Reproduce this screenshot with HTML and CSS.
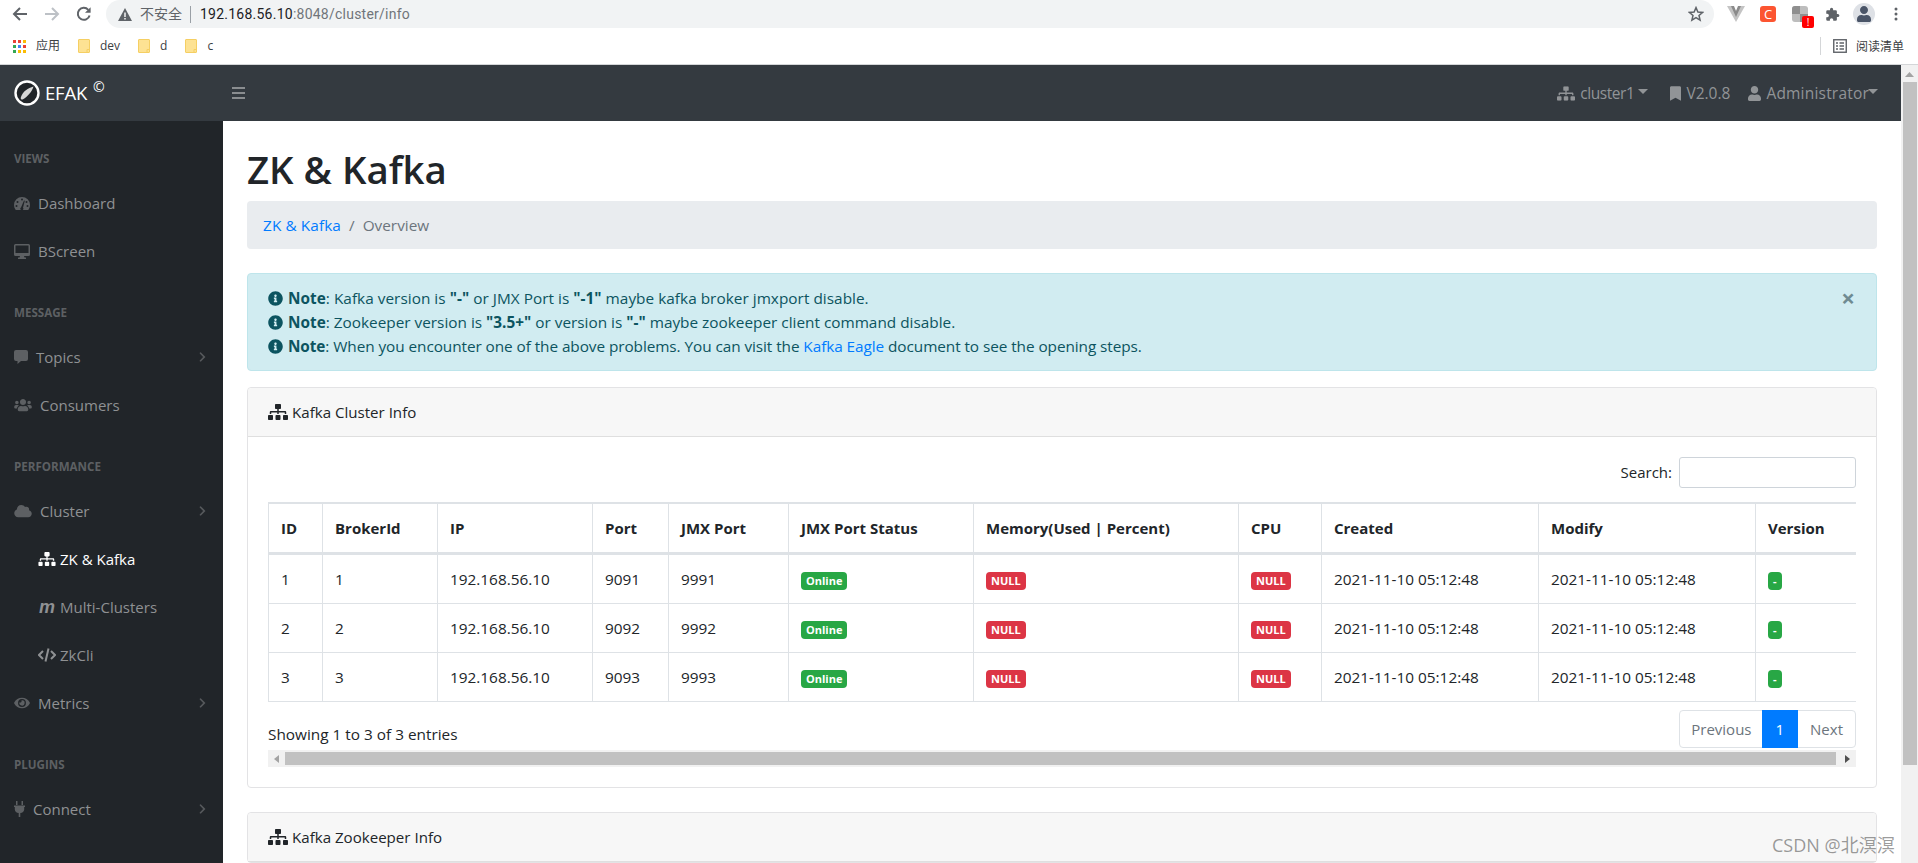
FILE: index.html
```html
<!DOCTYPE html>
<html lang="en">
<head>
<meta charset="utf-8">
<title>ZK &amp; Kafka - EFAK</title>
<link rel="stylesheet" href="styles.css">
</head>
<body>
<svg class="sprite" aria-hidden="true">
  <symbol id="i-sitemap" viewBox="0 0 640 512"><path d="M128 352H32c-17.67 0-32 14.33-32 32v96c0 17.67 14.33 32 32 32h96c17.67 0 32-14.33 32-32v-96c0-17.67-14.33-32-32-32zm-24-80h192v48h48v-48h192v48h48v-57.59c0-21.17-17.23-38.41-38.41-38.41H344v-64h40c17.67 0 32-14.33 32-32V32c0-17.67-14.33-32-32-32H256c-17.67 0-32 14.33-32 32v96c0 17.67 14.33 32 32 32h40v64H94.41C73.23 224 56 241.23 56 262.41V320h48v-48zm264 80h-96c-17.67 0-32 14.33-32 32v96c0 17.67 14.33 32 32 32h96c17.67 0 32-14.33 32-32v-96c0-17.67-14.33-32-32-32zm240 0h-96c-17.67 0-32 14.33-32 32v96c0 17.67 14.33 32 32 32h96c17.67 0 32-14.33 32-32v-96c0-17.67-14.33-32-32-32z"/></symbol>
  <symbol id="i-info" viewBox="0 0 512 512"><path d="M256 8C119.043 8 8 119.083 8 256c0 136.997 111.043 248 248 248s248-111.003 248-248C504 119.083 392.957 8 256 8zm0 110c23.196 0 42 18.804 42 42s-18.804 42-42 42-42-18.804-42-42 18.804-42 42-42zm56 254c0 6.627-5.373 12-12 12h-88c-6.627 0-12-5.373-12-12v-24c0-6.627 5.373-12 12-12h12v-64h-12c-6.627 0-12-5.373-12-12v-24c0-6.627 5.373-12 12-12h64c6.627 0 12 5.373 12 12v100h12c6.627 0 12 5.373 12 12v24z"/></symbol>
  <symbol id="i-chev" viewBox="0 0 320 512"><path d="M285.476 272.971L91.132 467.314c-9.373 9.373-24.569 9.373-33.941 0l-22.667-22.667c-9.357-9.357-9.375-24.522-.04-33.901L188.505 256 34.484 101.255c-9.335-9.379-9.317-24.544.04-33.901l22.667-22.667c9.373-9.373 24.569-9.373 33.941 0L285.475 239.03c9.373 9.372 9.373 24.568.001 33.941z"/></symbol>
</svg>

<header class="toolbar">
  <div class="nav-btns">
    <span class="nav-btn"><svg width="16" height="16" viewBox="0 0 16 16"><path d="M15 8H2.5M8 2 2 8l6 6" class="stroke-dark"/></svg></span>
    <span class="nav-btn"><svg width="16" height="16" viewBox="0 0 16 16"><path d="M1 8h12.5M8 2l6 6-6 6" class="stroke-light"/></svg></span>
    <span class="nav-btn"><svg width="16" height="16" viewBox="0 0 16 16"><path d="M13.6 9.5A6 6 0 1 1 12.3 3.8" class="stroke-dark"/><path d="M14.6 1.2v5.6H9z" class="fill-dark"/></svg></span>
  </div>
  <div class="address">
    <svg width="14" height="13" viewBox="0 0 14 13"><path d="M7 0 14 13H0z" class="fill-dark"/><path d="M6.3 4.5h1.4v4.5H6.3zM6.3 10h1.4v1.4H6.3z" class="fill-white"/></svg>
    <span class="insecure">不安全</span>
    <span class="addr-sep"></span>
    <span class="url"><span class="url-host">192.168.56.10</span>:8048/cluster/info</span>
    <svg class="star" width="16" height="16" viewBox="0 0 16 16"><path d="M8 1.6 9.9 6l4.7.4-3.6 3.1 1.1 4.6L8 11.7l-4.1 2.4L5 9.5 1.4 6.4 6.100 6z" class="stroke-thin"/></svg>
  </div>
  <div class="exts">
    <span class="ext"><svg width="18" height="16" viewBox="0 0 18 16"><path d="M0 0h6l3 6 3-6h6L9 16z" class="fill-v"/><path d="M4 0h3l2 5 2-5h3L9 11z" class="fill-v2"/></svg></span>
    <span class="ext"><span class="ext-c">C</span></span>
    <span class="ext ext-badge">
      <svg width="16" height="16" viewBox="0 0 16 16"><rect width="16" height="16" rx="3" class="fill-g1"/><path d="M0 8h8V0H3a3 3 0 0 0-3 3z" class="fill-g2"/><path d="M8 8h8v5a3 3 0 0 1-3 3H8z" class="fill-g2"/></svg>
      <span class="ext-flag">!</span>
    </span>
    <span class="ext"><svg width="15" height="15" viewBox="0 0 24 24"><path d="M20.5 11H19V7a2 2 0 0 0-2-2h-4V3.500a2.500 2.500 0 0 0-5 0V5H4a2 2 0 0 0-2 2v3.800h1.500a2.700 2.700 0 0 1 0 5.400H2V20a2 2 0 0 0 2 2h3.800v-1.500a2.700 2.700 0 0 1 5.400 0V22H17a2 2 0 0 0 2-2v-4h1.500a2.500 2.500 0 0 0 0-5z" class="fill-dark"/></svg></span>
    <span class="ext"><span class="avatar"><svg width="14" height="16" viewBox="0 0 448 512"><path d="M224 256c70.700 0 128-57.300 128-128S294.700 0 224 0 96 57.300 96 128s57.300 128 128 128zm89.600 32h-16.700c-22.200 10.200-46.900 16-72.900 16s-50.600-5.800-72.900-16h-16.700C60.200 288 0 348.200 0 422.400V464c0 26.500 21.500 48 48 48h352c26.500 0 48-21.500 48-48v-41.600c0-74.200-60.200-134.400-134.400-134.400z" class="fill-avatar"/></svg></span></span>
    <span class="ext"><svg width="4" height="14" viewBox="0 0 4 14"><circle cx="2" cy="2" r="1.500" class="fill-dark"/><circle cx="2" cy="7" r="1.500" class="fill-dark"/><circle cx="2" cy="12" r="1.500" class="fill-dark"/></svg></span>
  </div>
</header>

<nav class="bookmarks">
  <span class="bm">
    <svg width="13" height="13" viewBox="0 0 13 13"><rect width="3" height="3" fill="#ea4335"/><rect x="5" width="3" height="3" fill="#ea4335"/><rect x="10" width="3" height="3" fill="#fbbc04"/><rect y="5" width="3" height="3" fill="#34a853"/><rect x="5" y="5" width="3" height="3" fill="#4285f4"/><rect x="10" y="5" width="3" height="3" fill="#ea4335"/><rect y="10" width="3" height="3" fill="#34a853"/><rect x="5" y="10" width="3" height="3" fill="#fbbc04"/><rect x="10" y="10" width="3" height="3" fill="#fbbc04"/></svg>
    <span>应用</span>
  </span>
  <span class="bm"><svg class="folder" viewBox="0 0 12 14"><path d="M1 .5h10a.5.5 0 0 1 .5.5v12a.5.5 0 0 1-.5.500H1a.5.5 0 0 1-.5-.500V1A.5.5 0 0 1 1 .5z" class="folder-shape"/><path d="M9 13.500v-3h2.500" class="folder-fold"/></svg><span>dev</span></span>
  <span class="bm"><svg class="folder" viewBox="0 0 12 14"><path d="M1 .5h10a.5.5 0 0 1 .5.5v12a.5.5 0 0 1-.5.500H1a.5.5 0 0 1-.5-.500V1A.5.5 0 0 1 1 .5z" class="folder-shape"/><path d="M9 13.500v-3h2.500" class="folder-fold"/></svg><span>d</span></span>
  <span class="bm"><svg class="folder" viewBox="0 0 12 14"><path d="M1 .5h10a.5.5 0 0 1 .5.5v12a.5.5 0 0 1-.5.500H1a.5.5 0 0 1-.5-.500V1A.5.5 0 0 1 1 .5z" class="folder-shape"/><path d="M9 13.500v-3h2.500" class="folder-fold"/></svg><span>c</span></span>
  <span class="reading">
    <svg width="14" height="14" viewBox="0 0 14 14"><rect x=".75" y=".75" width="12.500" height="12.500" class="stroke-list"/><path d="M3 4h2M3 7h2M3 10h2M6.500 4H11M6.500 7H11M6.500 10H11" class="stroke-list"/></svg>
    <span>阅读清单</span>
  </span>
</nav>

<div class="window">
  <div class="viewport">
    <div class="navbar">
      <a class="brand">
        <svg width="26" height="26" viewBox="0 0 26 26"><circle cx="13" cy="13" r="11.500" class="brand-ring"/><path d="M19.500 6.500C14 8 9 11 6.800 17.500c-.5 1.500 1 2.700 2.300 1.800C13.500 16.500 17.500 12.500 19.500 6.500z" class="brand-needle"/></svg>
        <span class="brand-name">EFAK</span>
        <span class="brand-copy">©</span>
      </a>
      <span class="toggler"><span></span><span></span><span></span></span>
      <div class="nav-right">
        <span class="nav-item"><svg class="ic-nav" width="18" height="15" viewBox="0 0 640 512"><use href="#i-sitemap"/></svg><span class="nav-cluster">cluster1</span><i class="caret"></i></span>
        <span class="nav-item nav-ver"><svg class="ic-nav" width="11" height="15" viewBox="0 0 384 512"><path d="M0 512V48C0 21.490 21.490 0 48 0h288c26.510 0 48 21.490 48 48v464L192 400 0 512z"/></svg>V2.0.8</span>
        <span class="nav-item nav-admin"><svg class="ic-nav" width="13" height="15" viewBox="0 0 448 512"><path d="M224 256c70.700 0 128-57.300 128-128S294.700 0 224 0 96 57.300 96 128s57.300 128 128 128zm89.600 32h-16.700c-22.200 10.200-46.900 16-72.900 16s-50.600-5.800-72.900-16h-16.700C60.200 288 0 348.200 0 422.400V464c0 26.500 21.500 48 48 48h352c26.500 0 48-21.500 48-48v-41.600c0-74.200-60.200-134.400-134.400-134.400z"/></svg>Administrator<i class="caret"></i></span>
      </div>
    </div>

    <div class="layout">
      <aside class="sidebar">
        <div class="side-head">Views</div>
        <a class="side-link">
          <svg class="side-ic" width="16" height="14" viewBox="0 0 16 14"><path d="M8 1a8 8 0 0 0-8 8c0 1.600.4 3.100 1.200 4.300.2.400.5.700 1 .7h11.600c.5 0 .8-.3 1-.7A8 8 0 0 0 16 9a8 8 0 0 0-8-8z"/><circle cx="8" cy="3.500" r="1" class="hole"/><circle cx="3.500" cy="6" r="1" class="hole"/><circle cx="12.500" cy="6" r="1" class="hole"/><circle cx="2.500" cy="10" r="1" class="hole"/><circle cx="13.500" cy="10" r="1" class="hole"/><path d="M7 11.500 10 4.500l.8.3L9 11.800A1.500 1.500 0 1 1 7 11.500z" class="hole"/></svg>
          <span>Dashboard</span>
        </a>
        <a class="side-link">
          <svg class="side-ic" width="16" height="15" viewBox="0 0 16 15"><path d="M1.500 0h13A1.500 1.500 0 0 1 16 1.500v9a1.500 1.500 0 0 1-1.500 1.500H10l.5 1.500H12V15H4v-1.500h1.500L6 12H1.500A1.500 1.500 0 0 1 0 10.500v-9A1.500 1.500 0 0 1 1.500 0zm0 1.500v7.500h13V1.500z" fill-rule="evenodd"/></svg>
          <span>BScreen</span>
        </a>

        <div class="side-head">Message</div>
        <a class="side-link">
          <svg class="side-ic" width="14" height="14" viewBox="0 0 14 14"><path d="M2 0h10a2 2 0 0 1 2 2v7a2 2 0 0 1-2 2H7l-3.500 3V11H2a2 2 0 0 1-2-2V2a2 2 0 0 1 2-2z"/></svg>
          <span>Topics</span>
          <svg class="chev" width="7" height="12" viewBox="0 0 320 512"><use href="#i-chev"/></svg>
        </a>
        <a class="side-link">
          <svg class="side-ic" width="18" height="14" viewBox="0 0 640 512"><path d="M96 224c35.300 0 64-28.700 64-64s-28.700-64-64-64-64 28.700-64 64 28.700 64 64 64zm448 0c35.300 0 64-28.700 64-64s-28.700-64-64-64-64 28.700-64 64 28.700 64 64 64zm32 32h-64c-17.600 0-33.500 7.100-45.100 18.600 40.300 22.100 68.900 62 75.100 109.400h66c17.700 0 32-14.300 32-32v-32c0-35.300-28.700-64-64-64zm-256 0c61.900 0 112-50.100 112-112S381.900 32 320 32 208 82.100 208 144s50.100 112 112 112zm76.800 32h-8.300c-20.800 10-43.900 16-68.500 16s-47.600-6-68.500-16h-8.300C179.600 288 128 339.600 128 403.200V432c0 26.500 21.500 48 48 48h288c26.500 0 48-21.500 48-48v-28.800c0-63.600-51.600-115.200-115.200-115.200zm-223.700-13.400C161.500 263.100 145.600 256 128 256H64c-35.300 0-64 28.700-64 64v32c0 17.700 14.300 32 32 32h65.900c6.300-47.400 34.900-87.300 75.200-109.400z"/></svg>
          <span>Consumers</span>
        </a>

        <div class="side-head">Performance</div>
        <a class="side-link">
          <svg class="side-ic" width="18" height="14" viewBox="0 0 640 512"><path d="M537.600 226.600c4.100-10.700 6.400-22.400 6.400-34.600 0-53-43-96-96-96-19.700 0-38.100 6-53.300 16.200C367 64.200 315.300 32 256 32c-88.400 0-160 71.600-160 160 0 2.700.1 5.400.2 8.100C40.200 219.800 0 273.200 0 336c0 79.500 64.500 144 144 144h368c70.700 0 128-57.300 128-128 0-61.900-44-113.600-102.400-125.400z"/></svg>
          <span>Cluster</span>
          <svg class="chev" width="7" height="12" viewBox="0 0 320 512"><use href="#i-chev"/></svg>
        </a>
        <a class="side-link sub active">
          <svg class="sub-ic" width="18" height="14" viewBox="0 0 640 512"><use href="#i-sitemap"/></svg>
          <span>ZK &amp; Kafka</span>
        </a>
        <a class="side-link sub">
          <span class="sub-ic sub-m">m</span>
          <span>Multi-Clusters</span>
        </a>
        <a class="side-link sub">
          <svg class="sub-ic" width="18" height="14" viewBox="0 0 18 14"><path d="M5 3 1 7l4 4M13 3l4 4-4 4" class="code-line"/><path d="M10.500 0.500 7.500 13.500" class="code-line"/></svg>
          <span>ZkCli</span>
        </a>
        <a class="side-link">
          <svg class="side-ic" width="16" height="14" viewBox="0 0 576 512"><path d="M572.520 241.400C518.290 135.590 410.930 64 288 64S57.680 135.640 3.480 241.410a32.350 32.350 0 0 0 0 29.190C57.710 376.410 165.070 448 288 448s230.320-71.640 284.520-177.410a32.350 32.350 0 0 0 0-29.190zM288 400a144 144 0 1 1 144-144 143.930 143.930 0 0 1-144 144zm0-240a95.310 95.310 0 0 0-25.310 3.790 47.850 47.850 0 0 1-66.900 66.900A95.780 95.780 0 1 0 288 160z"/></svg>
          <span>Metrics</span>
          <svg class="chev" width="7" height="12" viewBox="0 0 320 512"><use href="#i-chev"/></svg>
        </a>

        <div class="side-head">Plugins</div>
        <a class="side-link">
          <svg class="side-ic" width="11" height="16" viewBox="0 0 11 16"><path d="M2 0h1.500v4H2zM7.500 0H9v4H7.500zM0 4.500h11V6h-.8v2.500A4 4 0 0 1 6.300 12v4H4.700v-4A4 4 0 0 1 .8 8.500V6H0z"/></svg>
          <span>Connect</span>
          <svg class="chev" width="7" height="12" viewBox="0 0 320 512"><use href="#i-chev"/></svg>
        </a>
      </aside>

      <main class="content">
        <h1 class="title">ZK &amp; Kafka</h1>
        <ol class="breadcrumb">
          <li><a class="link crumb-link">ZK &amp; Kafka</a></li>
          <li class="crumb-sep">/</li>
          <li class="crumb-cur">Overview</li>
        </ol>

        <div class="alert">
          <span class="alert-close">×</span>
          <div class="note-wide"><svg class="ic-info" viewBox="0 0 512 512"><use href="#i-info"/></svg> <strong>Note</strong>: Kafka version is <strong>"-"</strong> or JMX Port is <strong>"-1"</strong> maybe kafka broker jmxport disable.</div>
          <div><svg class="ic-info" viewBox="0 0 512 512"><use href="#i-info"/></svg> <strong>Note</strong>: Zookeeper version is <strong>"3.5+"</strong> or version is <strong>"-"</strong> maybe zookeeper client command disable.</div>
          <div class="note-tight"><svg class="ic-info" viewBox="0 0 512 512"><use href="#i-info"/></svg> <strong>Note</strong>: When you encounter one of the above problems. You can visit the <a class="link">Kafka Eagle</a> document to see the opening steps.</div>
        </div>

        <section class="card">
          <div class="card-head"><svg width="20" height="16" viewBox="0 0 640 512"><use href="#i-sitemap"/></svg>Kafka Cluster Info</div>
          <div class="card-body">
            <label class="search"><span class="search-label">Search:</span><input class="search-input" type="text"></label>
            <div class="table-clip">
              <table class="data">
                <colgroup>
                  <col class="c-id"><col class="c-broker"><col class="c-ip"><col class="c-port"><col class="c-jmx"><col class="c-status"><col class="c-mem"><col class="c-cpu"><col class="c-date"><col class="c-date"><col class="c-ver">
                </colgroup>
                <thead>
                  <tr><th>ID</th><th>BrokerId</th><th>IP</th><th>Port</th><th>JMX Port</th><th>JMX Port Status</th><th>Memory(Used | Percent)</th><th>CPU</th><th>Created</th><th>Modify</th><th>Version</th></tr>
                </thead>
                <tbody>
                  <tr><td>1</td><td>1</td><td>192.168.56.10</td><td>9091</td><td>9991</td><td><span class="badge ok">Online</span></td><td><span class="badge bad">NULL</span></td><td><span class="badge bad">NULL</span></td><td>2021-11-10 05:12:48</td><td>2021-11-10 05:12:48</td><td><span class="badge ok">-</span></td></tr>
                  <tr><td>2</td><td>2</td><td>192.168.56.10</td><td>9092</td><td>9992</td><td><span class="badge ok">Online</span></td><td><span class="badge bad">NULL</span></td><td><span class="badge bad">NULL</span></td><td>2021-11-10 05:12:48</td><td>2021-11-10 05:12:48</td><td><span class="badge ok">-</span></td></tr>
                  <tr><td>3</td><td>3</td><td>192.168.56.10</td><td>9093</td><td>9993</td><td><span class="badge ok">Online</span></td><td><span class="badge bad">NULL</span></td><td><span class="badge bad">NULL</span></td><td>2021-11-10 05:12:48</td><td>2021-11-10 05:12:48</td><td><span class="badge ok">-</span></td></tr>
                </tbody>
              </table>
            </div>
            <div class="table-foot">
              <span class="entries">Showing 1 to 3 of 3 entries</span>
              <div class="pager"><span class="page-btn prev">Previous</span><span class="page-btn current">1</span><span class="page-btn">Next</span></div>
            </div>
            <div class="hbar">
              <svg width="5" height="8" viewBox="0 0 5 8"><path d="M5 0v8L0 4z" class="arrow-off"/></svg>
              <span class="hbar-thumb"></span>
              <svg width="5" height="8" viewBox="0 0 5 8"><path d="M0 0v8l5-4z" class="arrow-on"/></svg>
            </div>
          </div>
        </section>

        <section class="card">
          <div class="card-head"><svg width="20" height="16" viewBox="0 0 640 512"><use href="#i-sitemap"/></svg>Kafka Zookeeper Info</div>
        </section>
      </main>
    </div>
  </div>

  <div class="vbar">
    <svg width="9" height="5" viewBox="0 0 9 5"><path d="M0 5h9L4.500 0z" class="arrow-off"/></svg>
    <span class="vbar-thumb"></span>
  </div>
</div>

<div class="watermark">CSDN @北溟溟</div>
</body>
</html>
```

FILE: styles.css
```css
* { box-sizing: border-box; }
html, body { margin: 0; padding: 0; }
body {
  width: 1918px;
  height: 863px;
  overflow: hidden;
  background: #fff;
  color: #212529;
  font-family: "Open Sans", "Noto Sans CJK SC", sans-serif;
  font-size: 15px;
  line-height: 24px;
}
.sprite { display: none; }
a { text-decoration: none; }

/* browser chrome */
.toolbar { display: flex; align-items: center; height: 28px; padding: 0 6px 0 4px; background: #fff; }
.nav-btns { display: flex; }
.nav-btn { display: flex; width: 32px; height: 28px; align-items: center; justify-content: center; }
.stroke-dark { fill: none; stroke: #5f6368; stroke-width: 2; }
.stroke-light { fill: none; stroke: #bdc1c6; stroke-width: 2; }
.stroke-thin { fill: none; stroke: #5f6368; stroke-width: 1.5; }
.stroke-list { fill: none; stroke: #5f6368; stroke-width: 1.4; }
.fill-dark { fill: #5f6368; }
.fill-white { fill: #fff; }
.fill-v { fill: #c4c4c4; }
.fill-v2 { fill: #8a8a8a; }
.fill-g1 { fill: #bdbdbd; }
.fill-g2 { fill: #8f8f8f; }
.fill-avatar { fill: #4a5568; }
.address {
  flex: 1;
  display: flex;
  align-items: center;
  height: 28px;
  margin-left: 6px;
  padding: 0 10px 0 12px;
  border-radius: 14px;
  background: #f1f3f4;
  font-family: Roboto, "Noto Sans CJK SC", sans-serif;
}
.insecure { margin-left: 8px; color: #5f6368; font-size: 14px; }
.addr-sep { width: 1px; height: 17px; margin: 0 9px 0 8px; background: #9aa0a6; }
.url { color: #70757a; font-size: 14px; letter-spacing: .24px; }
.url-host { color: #202124; }
.star { margin-left: auto; }
.exts { display: flex; margin-left: 6px; }
.ext { position: relative; display: flex; width: 32px; height: 28px; align-items: center; justify-content: center; }
.ext-c {
  width: 16px; height: 16px;
  border-radius: 3px;
  background: #fc5531;
  color: #fff;
  font-size: 13px;
  line-height: 16px;
  text-align: center;
}
.ext-flag {
  position: absolute;
  left: 18px; top: 16px;
  width: 12px; height: 12px;
  border-radius: 2px;
  background: #f00;
  color: #fff;
  font-size: 10px;
  line-height: 12px;
  text-align: center;
}
.avatar { display: flex; width: 22px; height: 22px; border-radius: 50%; background: #dee1e6; align-items: center; justify-content: center; }

.bookmarks {
  display: flex;
  align-items: center;
  height: 37px;
  padding: 0 14px 0 13px;
  border-bottom: 1px solid #d4d6d8;
  background: #fff;
  color: #3c4043;
  font-size: 12px;
}
.bm { display: flex; align-items: center; gap: 10px; margin-right: 18px; }
.folder { width: 12px; height: 14px; }
.folder-shape { fill: #fde293; stroke: #f5cf63; stroke-width: 1; }
.folder-fold { fill: none; stroke: #f5cf63; stroke-width: 1; }
.reading {
  display: flex;
  align-items: center;
  gap: 9px;
  height: 18px;
  margin-left: auto;
  padding-left: 12px;
  border-left: 1px solid #d4d6d8;
  font-family: "Noto Sans CJK SC", sans-serif;
}

/* window */
.window { display: flex; height: 798px; }
.viewport { flex: 1; min-width: 0; display: flex; flex-direction: column; }
.vbar { display: flex; flex-direction: column; align-items: center; width: 17px; padding-top: 7px; background: #f1f1f1; }
.vbar-thumb { width: 14px; height: 683px; margin-top: 5px; margin-left: 1px; background: #c1c1c1; }
.arrow-off { fill: #a3a3a3; }
.arrow-on { fill: #505050; }

/* navbar */
.navbar { display: flex; align-items: center; height: 56px; background: #343a40; }
.brand { display: flex; width: 223px; padding-left: 14px; color: #fff; align-items: center; }
.brand-ring { fill: #212529; stroke: #fff; stroke-width: 2.4; }
.brand-needle { fill: #d6d6d6; }
.brand-name { margin-left: 5px; font-size: 18.500px; line-height: 28px; letter-spacing: -.2px; }
.brand-copy { align-self: flex-start; margin: -2px 0 0 6px; font-size: 14px; line-height: 20px; }
.toggler { display: flex; flex-direction: column; gap: 3px; width: 13px; margin-left: 9px; }
.toggler span { height: 2px; background: #8a8d90; }
.nav-right { display: flex; align-items: center; margin-left: auto; padding-right: 23px; color: #919497; }
.nav-item { display: flex; align-items: center; margin-left: 18px; font-size: 15.500px; }
.nav-ver { margin-left: 22px; }
.nav-admin { letter-spacing: .2px; }
.nav-admin .caret { margin-left: -1px; }
.nav-cluster { letter-spacing: -.45px; }
.ic-nav { margin-right: 5px; fill: #919497; }
.caret { width: 0; height: 0; margin: -4px 0 0 4px; border: 5px solid transparent; border-top-color: #919497; border-bottom-width: 0; }

/* sidebar */
.layout { flex: 1; min-height: 0; display: flex; }
.sidebar { flex: none; width: 223px; background: #212529; color: #8f9193; }
.side-head {
  padding: 29px 14px 11px;
  color: #5d6063;
  font-size: 11.600px;
  font-weight: 700;
  line-height: 18px;
  text-transform: uppercase;
}
.side-link { display: flex; align-items: center; height: 48px; padding: 0 17px 0 14px; color: #8f9193; }
.side-ic { flex: none; margin-right: 8px; fill: #5d6063; }
.hole { fill: #212529; }
.chev { margin-left: auto; fill: #55585b; }
.side-link.sub { padding-left: 38px; }
.sub-ic { flex: none; width: 18px; margin-right: 4px; fill: #8f9193; }
.sub-m { color: #8f9193; font-family: "Liberation Sans", sans-serif; font-size: 18px; font-style: italic; font-weight: 700; line-height: 24px; text-align: center; }
.code-line { fill: none; stroke: #8f9193; stroke-width: 2; }
.side-link.active { color: #fff; }
.side-link.active .sub-ic { fill: #fff; }

/* content */
.content { flex: 1; min-width: 0; padding: 24px 24px 0; overflow: hidden; background: #fff; font-size: 15.350px; }
.title { margin: 0 0 8px; color: #212529; font-size: 38.400px; font-weight: 600; line-height: 48px; }
.breadcrumb {
  display: flex;
  height: 48px;
  margin: 0 0 24px;
  padding: 12px 16px;
  border-radius: 4px;
  background: #e9ecef;
  list-style: none;
}
.crumb-link { letter-spacing: .1px; }
.crumb-sep { padding: 0 8px; color: #6c757d; }
.crumb-cur { color: #6c757d; }
.link { color: #007bff; }

.alert {
  position: relative;
  margin-bottom: 16px;
  padding: 12px 20px;
  border: 1px solid #bee5eb;
  border-radius: 4px;
  background: #d1ecf1;
  color: #0c5460;
}
.note-wide { letter-spacing: .03px; }
.note-tight { letter-spacing: -.07px; }
.ic-info { width: 15px; height: 15px; margin-right: 1px; fill: #0c5460; vertical-align: -2px; }
.alert-close {
  position: absolute;
  top: 12px; right: 21px;
  color: #6f8b92;
  font-size: 24px;
  font-weight: 700;
  line-height: 24px;
}

.card { margin-bottom: 24px; border: 1px solid #e3e3e5; border-radius: 4px; background: #fff; }
.card-head {
  display: flex;
  align-items: center;
  height: 49px;
  padding: 0 20px 0 20px;
  border-bottom: 1px solid #dfdfdf;
  border-radius: 4px 4px 0 0;
  background: #f7f7f7;
  font-size: 15.100px;
}
.card-head svg { margin-right: 4px; fill: #212529; }
.card-body { padding: 20px; }
.search { display: flex; align-items: center; justify-content: flex-end; height: 31px; }
.search-label { margin-top: -2px; font-size: 15px; }
.search-input { width: 177px; height: 31px; margin-left: 7px; border: 1px solid #ced4da; border-radius: 3px; background: #fff; }
.table-clip { margin-top: 14px; overflow: hidden; }
.data { width: 1640px; border-collapse: separate; border-spacing: 0; border-top: 1px solid #dee2e6; border-left: 1px solid #dee2e6; border-bottom: 1px solid #dee2e6; table-layout: fixed; }
.data th, .data td { padding: 12px 11px 12px 12px; border-top: 1px solid #dee2e6; border-right: 1px solid #dee2e6; text-align: left; white-space: nowrap; }
.data th { padding-top: 12px; padding-bottom: 12px; border-bottom: 2px solid #dee2e6; font-weight: 700; font-size: 15px; }
.c-id { width: 54px; }
.c-broker { width: 115px; }
.c-ip { width: 155px; }
.c-port { width: 76px; }
.c-jmx { width: 120px; }
.c-status { width: 185px; }
.c-mem { width: 265px; }
.c-cpu { width: 83px; }
.c-date { width: 217px; }
.c-ver { width: 160px; }
.badge {
  display: inline-block;
  height: 18px;
  padding: 0 5px;
  border-radius: 4px;
  color: #fff;
  font-size: 11px;
  font-weight: 700;
  line-height: 18px;
  vertical-align: 0;
}
.badge.ok { background: #28a745; }
.badge.bad { background: #dc3545; }

.table-foot { display: flex; justify-content: space-between; margin-top: 8px; height: 38px; }
.entries { margin-top: 12px; }
.pager { display: flex; height: 38px; border: 1px solid #dee2e6; border-radius: 4px; font-size: 15px; }
.page-btn { padding: 6px 12px; color: #6c757d; }
.page-btn.prev { padding: 6px 10px 6px 11px; }
.page-btn.current { margin: -1px 0; padding: 7px 14px 6px; background: #007bff; color: #fff; }

.hbar { display: flex; align-items: center; height: 17px; margin-top: 2px; padding: 2px 6px; background: #f1f1f1; }
.hbar-thumb { flex: 1; height: 13px; margin: 0 9px 0 6px; background: #c1c1c1; }

.watermark {
  position: absolute;
  left: 1772px; top: 832px;
  color: rgba(70, 70, 70, .55);
  font-size: 18px;
  line-height: 26px;
}
```
